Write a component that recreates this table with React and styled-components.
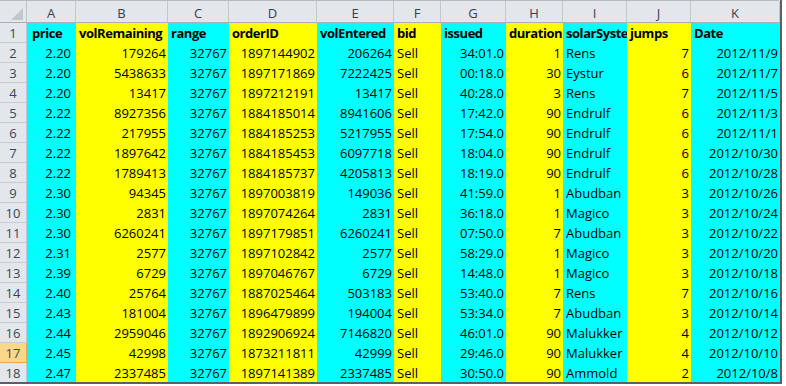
import React from "react";
import styled, { createGlobalStyle } from "styled-components";

const Global = createGlobalStyle`
  html, body { margin: 0; padding: 0; background: #ffffff; }
  body { font-family: "Open Sans", "Noto Sans", sans-serif; }
`;

const COLS = [49, 92, 61, 88, 77, 47, 65, 57, 64, 64, 89];
const LETTERS = ["A", "B", "C", "D", "E", "F", "G", "H", "I", "J", "K"];
const FIELDS = ["price", "volRemaining", "range", "orderID", "volEntered", "bid", "issued", "duration", "solarSystem", "jumps", "Date"];
const ALIGN = ["r", "r", "r", "r", "r", "l", "r", "r", "l", "r", "r"];

const DATA = [
  ["2.20", "179264", "32767", "1897144902", "206264", "Sell", "34:01.0", "1", "Rens", "7", "2012/11/9"],
  ["2.20", "5438633", "32767", "1897171869", "7222425", "Sell", "00:18.0", "30", "Eystur", "6", "2012/11/7"],
  ["2.20", "13417", "32767", "1897212191", "13417", "Sell", "40:28.0", "3", "Rens", "7", "2012/11/5"],
  ["2.22", "8927356", "32767", "1884185014", "8941606", "Sell", "17:42.0", "90", "Endrulf", "6", "2012/11/3"],
  ["2.22", "217955", "32767", "1884185253", "5217955", "Sell", "17:54.0", "90", "Endrulf", "6", "2012/11/1"],
  ["2.22", "1897642", "32767", "1884185453", "6097718", "Sell", "18:04.0", "90", "Endrulf", "6", "2012/10/30"],
  ["2.22", "1789413", "32767", "1884185737", "4205813", "Sell", "18:19.0", "90", "Endrulf", "6", "2012/10/28"],
  ["2.30", "94345", "32767", "1897003819", "149036", "Sell", "41:59.0", "1", "Abudban", "3", "2012/10/26"],
  ["2.30", "2831", "32767", "1897074264", "2831", "Sell", "36:18.0", "1", "Magico", "3", "2012/10/24"],
  ["2.30", "6260241", "32767", "1897179851", "6260241", "Sell", "07:50.0", "7", "Abudban", "3", "2012/10/22"],
  ["2.31", "2577", "32767", "1897102842", "2577", "Sell", "58:29.0", "1", "Magico", "3", "2012/10/20"],
  ["2.39", "6729", "32767", "1897046767", "6729", "Sell", "14:48.0", "1", "Magico", "3", "2012/10/18"],
  ["2.40", "25764", "32767", "1887025464", "503183", "Sell", "53:40.0", "7", "Rens", "7", "2012/10/16"],
  ["2.43", "181004", "32767", "1896479899", "194004", "Sell", "53:34.0", "7", "Abudban", "3", "2012/10/14"],
  ["2.44", "2959046", "32767", "1892906924", "7146820", "Sell", "46:01.0", "90", "Malukker", "4", "2012/10/12"],
  ["2.45", "42998", "32767", "1873211811", "42999", "Sell", "29:46.0", "90", "Malukker", "4", "2012/10/10"],
  ["2.47", "2337485", "32767", "1897141389", "2337485", "Sell", "30:50.0", "90", "Ammold", "2", "2012/10/8"],
];

const Frame = styled.div`
  width: 782px;
  height: 384px;
  box-sizing: border-box;
  padding: 0 1px 1px 0;
  border-right: 2px solid #5c5f63;
  border-bottom: 2px solid #5c5f63;
  background: #ffffff;
  overflow: hidden;
`;

const Sheet = styled.div`
  display: grid;
  grid-template-columns: 27px ${COLS.map((c) => c + "px").join(" ")};
  grid-template-rows: 22px repeat(18, 20px);
  border-top: 1px solid #b4bac2;
  box-sizing: border-box;
`;

const Corner = styled.div`
  position: relative;
  background: #e3e6ea;
  border-right: 1px solid #bfc5cd;
  border-bottom: 1px solid #a9b0ba;
  box-sizing: border-box;
`;

const CornerMark = styled.svg`
  position: absolute;
  right: 3px;
  bottom: 2px;
`;

const ColHead = styled.div`
  background: #e3e6ea;
  border-right: 1px solid #c3c8cf;
  border-bottom: 1px solid #a9b0ba;
  box-sizing: border-box;
  display: flex;
  align-items: center;
  justify-content: center;
  padding-top: 2px;
  font-size: 13px;
  color: #334155;
`;

const RowHead = styled.div`
  background: ${(p) => (p.$selected ? "#fbd78a" : "#e3e6ea")};
  border-right: 1px solid ${(p) => (p.$selected ? "#e5a84e" : "#bfc5cd")};
  border-bottom: 1px solid ${(p) => (p.$selected ? "#e5a84e" : "#c7ccd3")};
  box-sizing: border-box;
  display: flex;
  align-items: center;
  justify-content: center;
  font-size: 13px;
  color: #3a4656;
`;

const Cell = styled.div`
  background: ${(p) => (p.$fill === "cyan" ? "#00ffff" : "#ffff00")};
  color: #000000;
  font-size: 13px;
  font-weight: ${(p) => (p.$bold ? 700 : 400)};
  letter-spacing: ${(p) => (p.$bold ? "-0.45px" : "0")};
  white-space: nowrap;
  overflow: hidden;
  display: flex;
  align-items: center;
  justify-content: ${(p) => (p.$align === "r" ? "flex-end" : "flex-start")};
  padding: 0 ${(p) => p.$padR}px 0 ${(p) => p.$padL}px;
  box-sizing: border-box;
  line-height: 20px;
`;

export default function App() {
  return (
    <>
      <Global />
      <Frame>
        <Sheet>
          <Corner>
            <CornerMark width="12" height="12" viewBox="0 0 12 12">
              <polygon points="12,0 12,12 0,12" fill="#c2c7ce" />
            </CornerMark>
          </Corner>
          {LETTERS.map((l) => (
            <ColHead key={l}>{l}</ColHead>
          ))}

          <RowHead>1</RowHead>
          {FIELDS.map((f, i) => (
            <Cell
              key={f}
              $fill={i % 2 === 0 ? "cyan" : "yellow"}
              $bold
              $align="l"
              $padL={i === 0 ? 5 : 3}
              $padR={0}
            >
              {f}
            </Cell>
          ))}

          {DATA.map((row, r) => (
            <React.Fragment key={r}>
              <RowHead $selected={r + 2 === 17}>{r + 2}</RowHead>
              {row.map((v, i) => (
                <Cell
                  key={i}
                  $fill={i % 2 === 0 ? "cyan" : "yellow"}
                  $align={ALIGN[i]}
                  $padL={3}
                  $padR={i === 0 ? 5 : 2}
                >
                  {v}
                </Cell>
              ))}
            </React.Fragment>
          ))}
        </Sheet>
      </Frame>
    </>
  );
}
